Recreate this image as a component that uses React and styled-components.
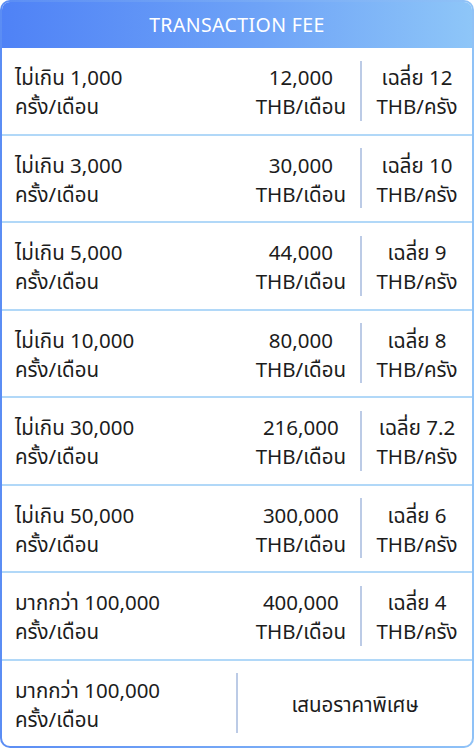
import React from 'react';
import styled, { createGlobalStyle } from 'styled-components';

const GlobalStyle = createGlobalStyle`
  html, body {
    margin: 0;
    padding: 0;
    background: #ffffff;
  }
  body {
    font-family: "Noto Sans Thai", "Noto Sans", "Liberation Sans", sans-serif;
  }
`;

const Card = styled.div`
  width: 474px;
  height: 748px;
  box-sizing: border-box;
  border: 2px solid transparent;
  border-radius: 10px;
  background:
    linear-gradient(#ffffff, #ffffff) padding-box,
    linear-gradient(90deg, #5b8df4 0%, #8fc2f7 100%) border-box;
  overflow: hidden;
  display: flex;
  flex-direction: column;
`;

const Header = styled.div`
  height: 46px;
  flex-shrink: 0;
  background: linear-gradient(90deg, #4f82f6 0%, #6ea3f7 55%, #8ec6f8 100%);
  color: #ffffff;
  font-size: 19.5px;
  letter-spacing: 0.4px;
  display: flex;
  align-items: center;
  justify-content: center;
  padding-top: 1px;
  box-sizing: border-box;
`;

const Row = styled.div`
  flex: 1;
  display: grid;
  grid-template-columns: ${(p) => (p.$special ? '1fr 2px 1fr' : '1fr auto 2px 110px')};
  align-items: center;
  box-sizing: border-box;
  padding-top: 5px;
  border-top: ${(p) => (p.$first ? 'none' : '2px solid #b1d8f8')};
  color: #1c1c1c;
  font-size: 20.5px;
  line-height: 29px;
`;

const Label = styled.div`
  padding-left: 13px;
`;

const Price = styled.div`
  text-align: center;
  padding-right: 14px;
`;

const Divider = styled.div`
  width: 2px;
  height: 60px;
  margin-top: -5px;
  background: #bccbe6;
`;

const Avg = styled.div`
  text-align: center;
`;

const Special = styled.div`
  text-align: center;
`;

const tiers = [
  { label: 'ไม่เกิน 1,000', price: '12,000', avg: '12' },
  { label: 'ไม่เกิน 3,000', price: '30,000', avg: '10' },
  { label: 'ไม่เกิน 5,000', price: '44,000', avg: '9' },
  { label: 'ไม่เกิน 10,000', price: '80,000', avg: '8' },
  { label: 'ไม่เกิน 30,000', price: '216,000', avg: '7.2' },
  { label: 'ไม่เกิน 50,000', price: '300,000', avg: '6' },
  { label: 'มากกว่า 100,000', price: '400,000', avg: '4' },
];

export default function App() {
  return (
    <>
      <GlobalStyle />
      <Card>
        <Header>TRANSACTION FEE</Header>
        {tiers.map((t, i) => (
          <Row key={t.label} $first={i === 0}>
            <Label>
              {t.label}
              <br />
              ครั้ง/เดือน
            </Label>
            <Price>
              {t.price}
              <br />
              THB/เดือน
            </Price>
            <Divider />
            <Avg>
              เฉลี่ย {t.avg}
              <br />
              THB/ครัง
            </Avg>
          </Row>
        ))}
        <Row $special>
          <Label>
            มากกว่า 100,000
            <br />
            ครั้ง/เดือน
          </Label>
          <Divider />
          <Special>เสนอราคาพิเศษ</Special>
        </Row>
      </Card>
    </>
  );
}
